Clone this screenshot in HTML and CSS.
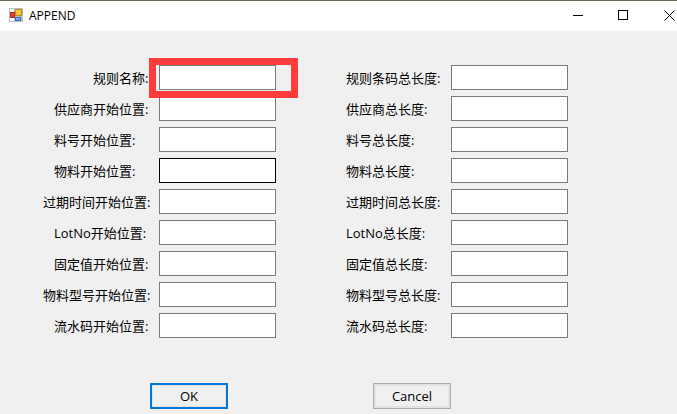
FILE: index.html
```html
<!DOCTYPE html>
<html lang="en">
<head>
<meta charset="UTF-8">
<link rel="stylesheet" href="styles.css">
<title>APPEND</title>
</head>
<body>
<div class="titlebar">
  <svg class="app-icon" width="14" height="14" viewBox="0 0 14 14">
    <rect x="0" y="0" width="14" height="14" fill="#bdbdbd"/>
    <rect x="1" y="1" width="4" height="3" fill="#f6f6f6"/>
    <rect x="1" y="10" width="4" height="3" fill="#f6f6f6"/>
    <rect x="1" y="4" width="5" height="6" fill="#a8322a"/>
    <rect x="2" y="5" width="3" height="4" fill="#e8402c"/>
    <rect x="6" y="1" width="7" height="7" fill="#b8901c"/>
    <rect x="7" y="2" width="5" height="5" fill="#f6c63c"/>
    <rect x="6" y="9" width="6" height="4" fill="#3a6cc8"/>
    <rect x="7" y="10" width="4" height="2" fill="#7ea8ec"/>
  </svg>
  <span class="title">APPEND</span>
  <div class="controls">
    <svg width="11" height="11" viewBox="0 0 11 11"><path d="M1 5.5H11" stroke="#000" fill="none"/></svg>
    <svg width="11" height="11" viewBox="0 0 11 11"><rect x="0.5" y="0.5" width="9" height="9" stroke="#000" fill="none"/></svg>
    <svg width="11" height="11" viewBox="0 0 11 11"><path d="M0.5 0.5L10.5 10.5M10.5 0.5L0.5 10.5" stroke="#000" fill="none"/></svg>
  </div>
</div>
<div class="content">
  <div class="form">
    <label class="left name">规则名称:</label><input type="text"><label class="right">规则条码总长度:</label><input type="text">
    <label class="left">供应商开始位置:</label><input type="text"><label class="right">供应商总长度:</label><input type="text">
    <label class="left">料号开始位置:</label><input type="text"><label class="right">料号总长度:</label><input type="text">
    <label class="left">物料开始位置:</label><input class="focused" type="text"><label class="right">物料总长度:</label><input type="text">
    <label class="left wide">过期时间开始位置:</label><input type="text"><label class="right">过期时间总长度:</label><input type="text">
    <label class="left">LotNo开始位置:</label><input type="text"><label class="right">LotNo总长度:</label><input type="text">
    <label class="left">固定值开始位置:</label><input type="text"><label class="right">固定值总长度:</label><input type="text">
    <label class="left wide">物料型号开始位置:</label><input type="text"><label class="right">物料型号总长度:</label><input type="text">
    <label class="left">流水码开始位置:</label><input type="text"><label class="right">流水码总长度:</label><input type="text">
  </div>
  <div class="buttons">
    <button class="btn default">OK</button>
    <button class="btn">Cancel</button>
  </div>
  <div class="highlight"></div>
</div>
</body>
</html>
```

FILE: styles.css
```css
html, body {
  height: 100%;
}
body {
  margin: 0;
  overflow: hidden;
  background: #f0f0f0;
  color: #000;
  font-family: "Open Sans", "Noto Sans CJK SC", sans-serif;
  font-size: 13px;
}
.titlebar {
  display: flex;
  align-items: center;
  box-sizing: border-box;
  height: 31px;
  padding-left: 9px;
  padding-bottom: 2px;
  background: #fff;
  border-top: 1px solid #6e6e5c;
}
.app-icon {
  margin-right: 6px;
}
.title {
  font-size: 12px;
}
.controls {
  display: flex;
  gap: 35px;
  margin-left: auto;
  padding-right: 2px;
}
.content {
  position: relative;
  padding-top: 34px;
}
.form {
  display: grid;
  grid-template-columns: 159px 117px 70px 105px 117px;
  grid-auto-rows: 25px;
  row-gap: 6px;
}
label {
  font-family: "Open Sans", "Noto Sans CJK SC", sans-serif;
  padding-top: 1px;
  line-height: 25px;
  white-space: nowrap;
}
.left {
  padding-left: 54px;
}
.left.name {
  padding-left: 93px;
}
.left.wide {
  padding-left: 43px;
}
.right {
  grid-column: 3 / 5;
  padding-left: 70px;
}
input {
  box-sizing: border-box;
  width: 117px;
  height: 25px;
  margin: 0;
  padding: 0;
  background: #fff;
  border: 1px solid #7a7a7a;
  border-radius: 0;
}
input.focused {
  border-color: #000;
}
.buttons {
  display: flex;
  gap: 145px;
  margin-top: 45px;
  padding-left: 150px;
}
.btn {
  box-sizing: border-box;
  width: 78px;
  height: 26px;
  padding: 0;
  font-family: "Open Sans", sans-serif;
  font-size: 13px;
  color: #000;
  background: #f0f0f0;
  border: 1px solid #adadad;
  box-shadow: inset 0 0 0 2px #e3e3e3;
}
.btn.default {
  border: 2px solid #0078d7;
  box-shadow: inset 0 0 0 1px #e3e3e3;
}
.highlight {
  position: absolute;
  left: 149px;
  top: 27px;
  box-sizing: border-box;
  width: 149px;
  height: 40px;
  border: 7px solid #ff3b3b;
}
```
